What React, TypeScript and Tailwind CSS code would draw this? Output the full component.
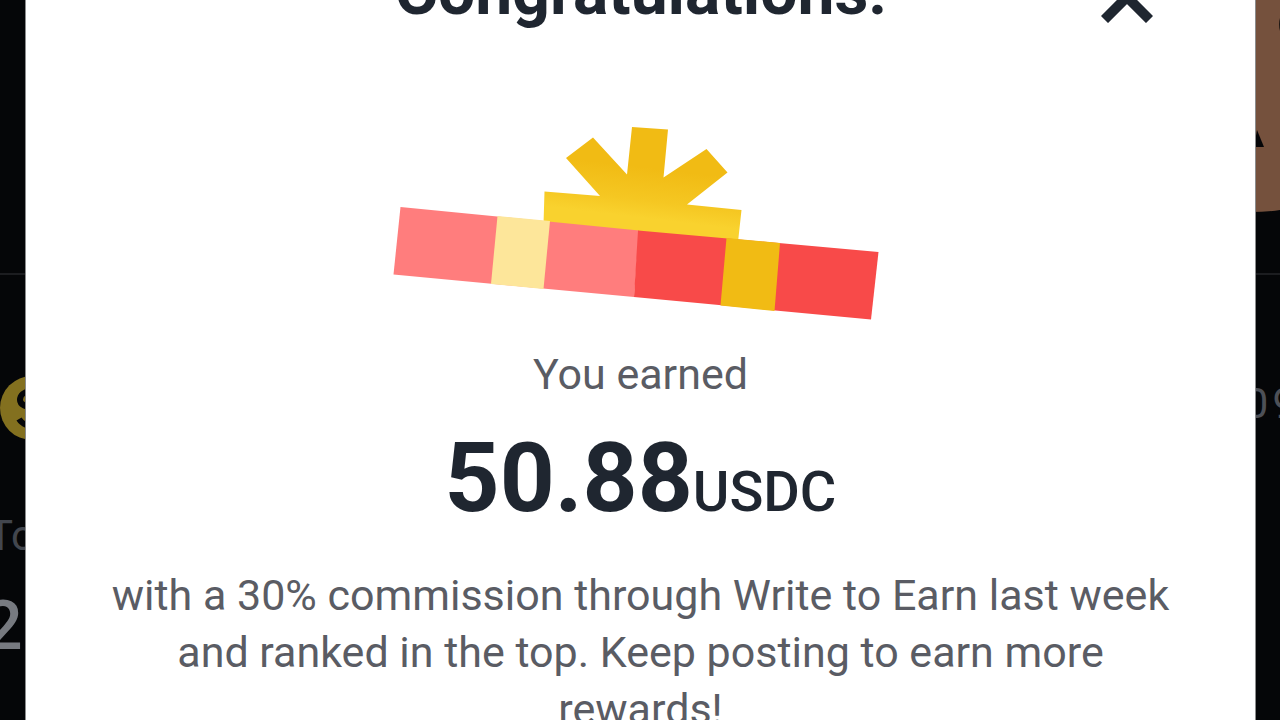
function GiftLid() {
  return (
    <svg viewBox="390 122 492 202" className="w-[492px] max-w-full" role="img" aria-label="Gift box lid">
      <defs>
        <linearGradient id="bow" gradientUnits="userSpaceOnUse" x1="650" y1="168" x2="644" y2="218">
          <stop offset="0" stopColor="#f1bb14" />
          <stop offset="0.65" stopColor="#f5c722" />
          <stop offset="1" stopColor="#f9d22e" />
        </linearGradient>
      </defs>
      <path
        d="M544.5 191.5 600 196 566 158 593 137.500 627 174.500 632 127 668 129.500 663.500 177.500 706.500 149 727.500 172.500 687 204.500 741.500 210 738 242 543.500 224Z"
        fill="url(#bow)"
      />
      <path d="M400.500 207 639 230.500 634 297 393.500 274.500Z" fill="#ff7d7d" />
      <path d="M638 230.400 878.500 252 871 319.500 634 297Z" fill="#f84a49" />
      <path d="M497.500 216 550 221 543.500 289 491 284Z" fill="#fde69a" />
      <path d="M726.500 238 780 243 774.500 311 720.500 305.500Z" fill="#f1bb14" />
    </svg>
  );
}

function Backdrop() {
  return (
    <div className="flex h-full flex-col bg-[#050608]" aria-hidden="true">
      <div className="flex h-[275px] justify-end border-b-2 border-[#1c1d20]">
        <svg viewBox="0 0 60 212" className="h-[212px] w-[60px]">
          <path d="M0 0H60V210Q48 212 30 212H0Z" fill="#75513d" />
          <path d="M37 130 44 147 34 147Z" fill="#050608" />
          <path d="M60 18Q58 24 60 31Z" fill="#1d1714" />
        </svg>
      </div>
      <div className="flex items-start justify-between pt-[101px]">
        <svg viewBox="0 0 64 64" className="size-16">
          <circle cx="32" cy="32" r="32" fill="#83701f" />
          <path
            d="M44 22C37 11 20 14 20 24S45 31 45 41 26 54 19 43"
            fill="none"
            stroke="#050608"
            strokeWidth="6"
          />
        </svg>
        <span className="-mr-4 flex gap-1 text-[42px] leading-[56px] text-[#4d5057]">
          <span>0</span>
          <span>9</span>
        </span>
      </div>
      <div className="-ml-3 pt-[70px] text-[42px] leading-[52px] text-[#42464e]">Total</div>
      <div className="-ml-4 pt-6 text-[68px] leading-[80px] font-medium text-[#777a80]">2</div>
    </div>
  );
}

export default function App() {
  return (
    <div className="relative h-screen overflow-hidden bg-[#050608] font-['Roboto','Noto_Sans',sans-serif]">
      <Backdrop />
      <section
        role="dialog"
        aria-labelledby="dialog-title"
        className="absolute inset-y-0 right-6 left-[25px] flex flex-col items-center border-x border-[#8b8c8d] bg-white text-center text-[#1f2630]"
      >
        <header className="-mt-[46px] grid w-full grid-cols-[1fr_auto_1fr] items-center px-[102px]">
          <h1 id="dialog-title" className="col-start-2 text-[66px] leading-[76px] font-bold">
            Congratulations!
          </h1>
          <button type="button" aria-label="Close" className="mt-2.5 justify-self-end">
            <svg viewBox="0 0 52 52" className="size-[52px]">
              <path d="M3.500 3.500 48.500 48.500M48.500 3.500 3.500 48.500" stroke="#1f2630" strokeWidth="10" />
            </svg>
          </button>
        </header>
        <div className="-ml-2.5 pt-[92px]">
          <GiftLid />
        </div>
        <p className="pt-[22px] text-[43px] leading-[56px] text-[#5a5c64]">You earned</p>
        <p className="flex items-baseline pt-4">
          <strong className="text-[96px] leading-[120px] font-bold">50.88</strong>
          <span className="text-[56px] font-medium">USDC</span>
        </p>
        <p className="px-20 pt-[29px] text-[43px] leading-[57px] text-[#5a5c64]">
          with a 30% commission through Write to Earn last week and ranked in the top. Keep posting to earn more
          rewards!
        </p>
      </section>
    </div>
  );
}
